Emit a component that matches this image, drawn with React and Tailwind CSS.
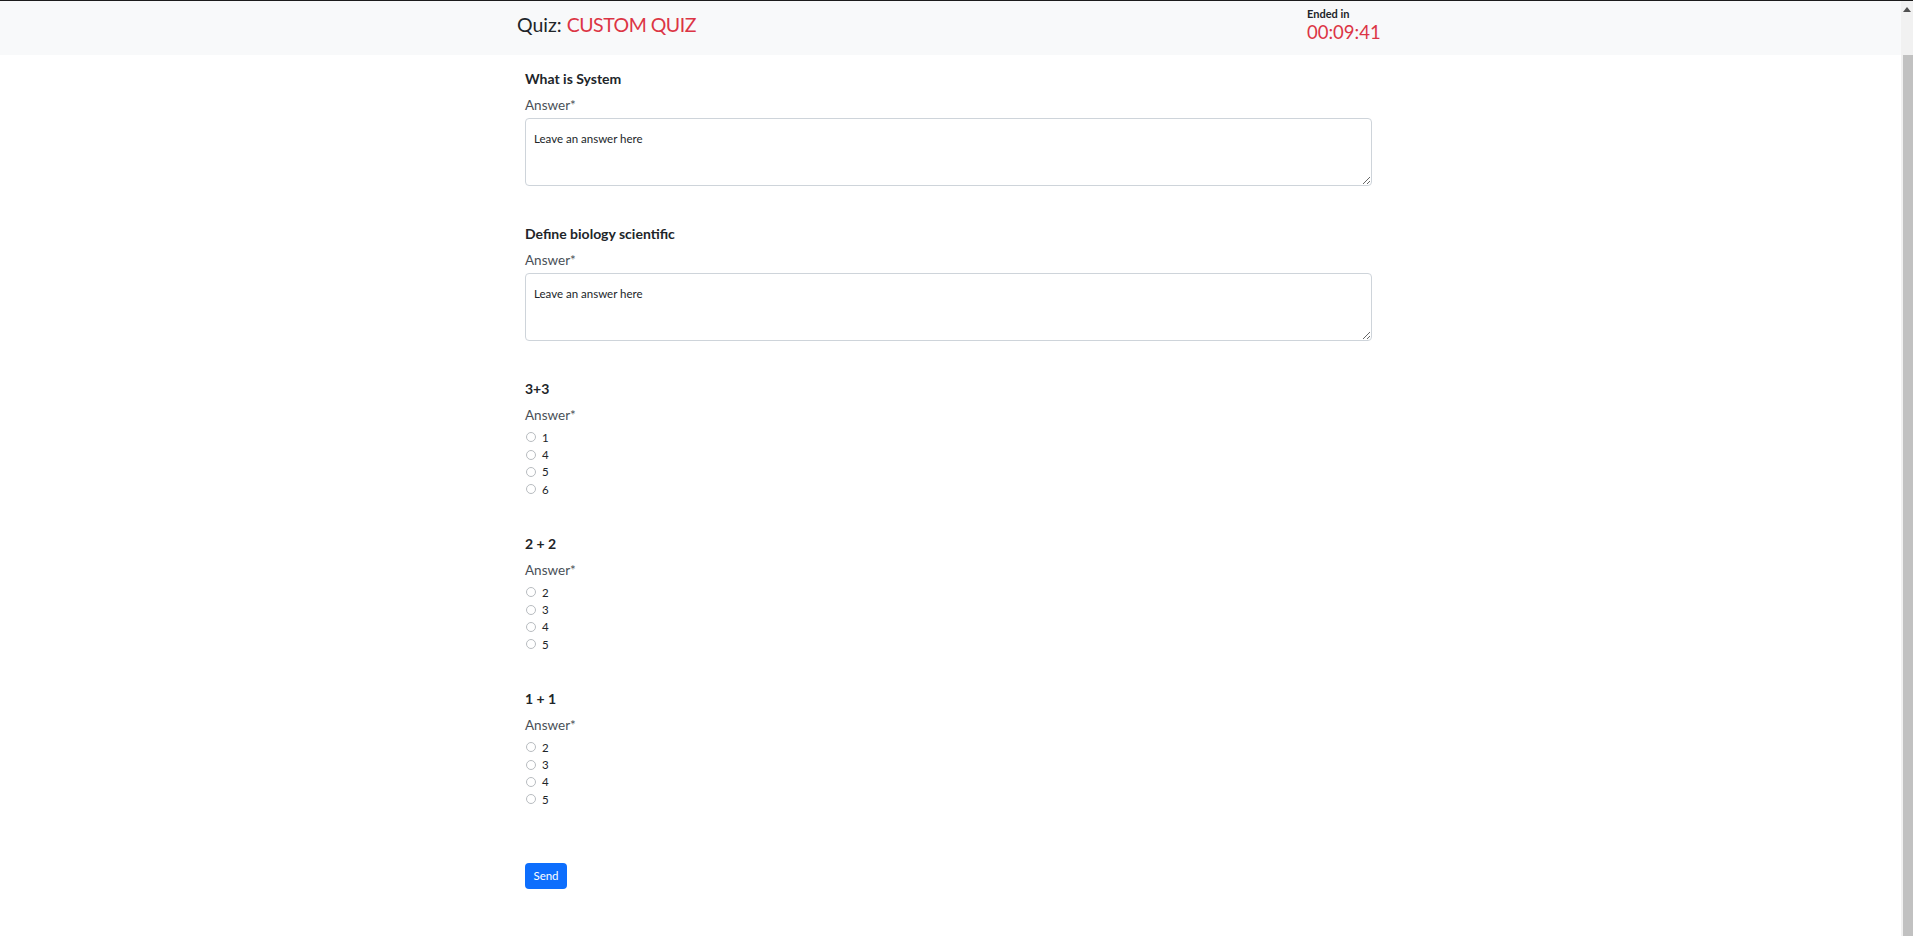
import React from "react";

const font = { fontFamily: 'Lato, "Open Sans", sans-serif' };

function TextQuestion({ title }) {
  return (
    <div className="h-[155px] flex flex-col">
      <div className="text-[14px] font-bold leading-[17px] text-[#212529] mb-[8px]">{title}</div>
      <div className="text-[13.5px] leading-[21px] text-[#495057] mb-[2.5px]">Answer*</div>
      <textarea
        className="w-full h-[68px] border border-[#ced4da] rounded-[4px] px-[8px] pt-[12px] text-[11.5px] leading-[16px] text-[#212529] placeholder:text-[#212529] outline-none"
        placeholder="Leave an answer here"
      />
    </div>
  );
}

function RadioQuestion({ title, options }) {
  return (
    <div className="h-[155px] flex flex-col">
      <div className="text-[14px] font-bold leading-[17px] text-[#212529] mb-[8px]">{title}</div>
      <div className="text-[13.5px] leading-[21px] text-[#495057] mb-[3px]">Answer*</div>
      <div className="flex flex-col">
        {options.map((o, i) => (
          <label key={i} className="flex items-center h-[17.4px] gap-[6px] text-[11.5px] text-[#212529]">
            <span className="w-[10px] h-[10px] rounded-full border border-[#b8bcc0] bg-white ml-[1px]" />
            <span>{o}</span>
          </label>
        ))}
      </div>
    </div>
  );
}

export default function App() {
  return (
    <div className="h-[936px] flex overflow-hidden bg-white border-t border-[#1c1c1c]" style={font}>
      <div className="flex-1 flex flex-col">
        <header className="h-[54px] bg-[#f8f9fa] shrink-0">
          <div className="ml-[517px] w-[867px] flex justify-between">
            <div className="pt-[11px] text-[19.5px] leading-[26px] text-[#212529]">
              Quiz: <span className="text-[#dc3545] tracking-[-0.5px]">CUSTOM QUIZ</span>
            </div>
            <div className="w-[77px] flex flex-col pt-[5px]">
              <div className="text-[11px] font-bold leading-[15px] text-[#212529]">Ended in</div>
              <div className="text-[18.5px] leading-[22px] text-[#dc3545]">00:09:41</div>
            </div>
          </div>
        </header>
        <main className="ml-[525px] w-[847px] pt-[14.5px] flex flex-col">
          <TextQuestion title="What is System" />
          <TextQuestion title="Define biology scientific" />
          <RadioQuestion title="3+3" options={["1", "4", "5", "6"]} />
          <RadioQuestion title="2 + 2" options={["2", "3", "4", "5"]} />
          <RadioQuestion title="1 + 1" options={["2", "3", "4", "5"]} />
          <div className="mt-[17.5px]">
            <button className="h-[26px] w-[42px] rounded-[4px] bg-[#0d6efd] text-white text-[11.5px]">Send</button>
          </div>
        </main>
      </div>
      <div className="w-[12px] bg-[#f1f1f1] flex flex-col items-end shrink-0">
        <div className="h-[54px] w-full flex justify-center pt-[6px]">
          <svg width="8" height="5" viewBox="0 0 8 5"><path d="M4 0 L8 5 L0 5 Z" fill="#505050" /></svg>
        </div>
        <div className="flex-1 w-[10px] bg-[#c1c1c1]" />
      </div>
    </div>
  );
}
